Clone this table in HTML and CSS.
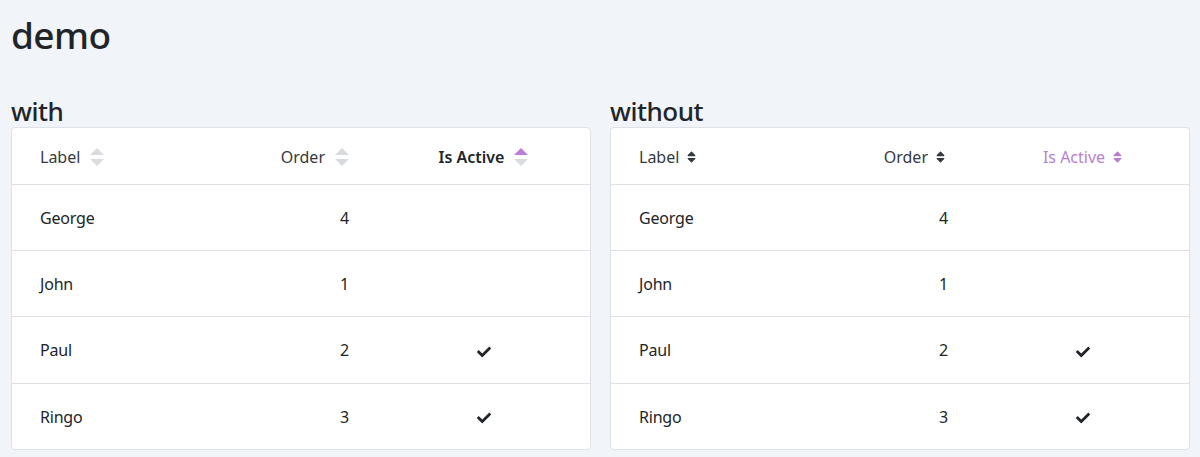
FILE: index.html
```html
<!DOCTYPE html>
<html lang="en">
<head>
<meta charset="utf-8">
<title>demo</title>
<link rel="stylesheet" href="styles.css">
</head>
<body>
<h1 class="title">demo</h1>
<div class="panels">
  <section class="panel">
    <h3 class="panel-title">with</h3>
    <div class="card">
      <table class="grid">
        <colgroup><col class="c1"><col class="c2"><col class="c3"></colgroup>
        <thead>
          <tr>
            <th class="left"><span class="th-in">Label <svg class="tri" viewBox="0 0 14 18"><path class="up" d="M7 0L14 7H0z"/><path class="down" d="M0 11H14L7 18z"/></svg></span></th>
            <th class="right"><span class="th-in">Order <svg class="tri" viewBox="0 0 14 18"><path class="up" d="M7 0L14 7H0z"/><path class="down" d="M0 11H14L7 18z"/></svg></span></th>
            <th class="center active-b"><span class="th-in">Is Active <svg class="tri" viewBox="0 0 14 18"><path class="up on" d="M7 0L14 7H0z"/><path class="down" d="M0 11H14L7 18z"/></svg></span></th>
          </tr>
        </thead>
        <tbody>
          <tr><td class="left">George</td><td class="right">4</td><td class="center"></td></tr>
          <tr><td class="left">John</td><td class="right">1</td><td class="center"></td></tr>
          <tr class="tall"><td class="left">Paul</td><td class="right">2</td><td class="center"><svg class="check" viewBox="0 0 512 512"><path d="M173.898 439.404l-166.4-166.4c-9.997-9.997-9.997-26.206 0-36.204l36.203-36.204c9.997-9.998 26.207-9.998 36.204 0L192 312.69 432.095 72.596c9.997-9.997 26.207-9.997 36.204 0l36.203 36.204c9.997 9.997 9.997 26.206 0 36.204l-294.4 294.401c-9.998 9.997-26.207 9.997-36.204-.001z"/></svg></td></tr>
          <tr><td class="left">Ringo</td><td class="right">3</td><td class="center"><svg class="check" viewBox="0 0 512 512"><path d="M173.898 439.404l-166.4-166.4c-9.997-9.997-9.997-26.206 0-36.204l36.203-36.204c9.997-9.998 26.207-9.998 36.204 0L192 312.69 432.095 72.596c9.997-9.997 26.207-9.997 36.204 0l36.203 36.204c9.997 9.997 9.997 26.206 0 36.204l-294.4 294.401c-9.998 9.997-26.207 9.997-36.204-.001z"/></svg></td></tr>
        </tbody>
      </table>
    </div>
  </section>
  <section class="panel">
    <h3 class="panel-title">without</h3>
    <div class="card">
      <table class="grid">
        <colgroup><col class="c1"><col class="c2"><col class="c3"></colgroup>
        <thead>
          <tr>
            <th class="left"><span class="th-in">Label <svg class="sort" viewBox="0 0 320 512"><path d="M41 288h238c21.4 0 32.1 25.9 17 41L177 448c-9.4 9.4-24.6 9.4-33.9 0L24 329c-15.1-15.1-4.4-41 17-41zm255-105L177 64c-9.4-9.4-24.6-9.4-33.9 0L24 183c-15.1 15.1-4.4 41 17 41h238c21.4 0 32.1-25.9 17-41z"/></svg></span></th>
            <th class="right"><span class="th-in">Order <svg class="sort sort-r" viewBox="0 0 320 512"><path d="M41 288h238c21.4 0 32.1 25.9 17 41L177 448c-9.4 9.4-24.6 9.4-33.9 0L24 329c-15.1-15.1-4.4-41 17-41zm255-105L177 64c-9.4-9.4-24.6-9.4-33.9 0L24 183c-15.1 15.1-4.4 41 17 41h238c21.4 0 32.1-25.9 17-41z"/></svg></span></th>
            <th class="center purple"><span class="th-in">Is Active <svg class="sort" viewBox="0 0 320 512"><path d="M41 288h238c21.4 0 32.1 25.9 17 41L177 448c-9.4 9.4-24.6 9.4-33.9 0L24 329c-15.1-15.1-4.4-41 17-41zm255-105L177 64c-9.4-9.4-24.6-9.4-33.9 0L24 183c-15.1 15.1-4.4 41 17 41h238c21.4 0 32.1-25.9 17-41z"/></svg></span></th>
          </tr>
        </thead>
        <tbody>
          <tr><td class="left">George</td><td class="right">4</td><td class="center"></td></tr>
          <tr><td class="left">John</td><td class="right">1</td><td class="center"></td></tr>
          <tr class="tall"><td class="left">Paul</td><td class="right">2</td><td class="center"><svg class="check" viewBox="0 0 512 512"><path d="M173.898 439.404l-166.4-166.4c-9.997-9.997-9.997-26.206 0-36.204l36.203-36.204c9.997-9.998 26.207-9.998 36.204 0L192 312.69 432.095 72.596c9.997-9.997 26.207-9.997 36.204 0l36.203 36.204c9.997 9.997 9.997 26.206 0 36.204l-294.4 294.401c-9.998 9.997-26.207 9.997-36.204-.001z"/></svg></td></tr>
          <tr><td class="left">Ringo</td><td class="right">3</td><td class="center"><svg class="check" viewBox="0 0 512 512"><path d="M173.898 439.404l-166.4-166.4c-9.997-9.997-9.997-26.206 0-36.204l36.203-36.204c9.997-9.998 26.207-9.998 36.204 0L192 312.69 432.095 72.596c9.997-9.997 26.207-9.997 36.204 0l36.203 36.204c9.997 9.997 9.997 26.206 0 36.204l-294.4 294.401c-9.998 9.997-26.207 9.997-36.204-.001z"/></svg></td></tr>
        </tbody>
      </table>
    </div>
  </section>
</div>
</body>
</html>
```

FILE: styles.css
```css
html, body {
  margin: 0;
  padding: 0;
  background: #f1f4f8;
}
body {
  font-family: "Noto Sans", "Open Sans", sans-serif;
  color: #212529;
  padding: 0 10px 0 11px;
}
.title {
  font-size: 37px;
  font-weight: 500;
  letter-spacing: -0.6px;
  line-height: 48px;
  margin: 11px 0 0 0;
}
.panels {
  display: grid;
  grid-template-columns: 1fr 1fr;
  column-gap: 19px;
  margin-top: 36px;
}
.panel-title {
  font-size: 26px;
  font-weight: 500;
  letter-spacing: -0.5px;
  line-height: 32px;
  margin: 0;
}
.card {
  background: #fff;
  border: 1px solid #dee2e6;
  border-radius: 4px;
  overflow: hidden;
}
.grid {
  width: 100%;
  border-collapse: collapse;
  table-layout: fixed;
  font-size: 16px;
}
.c1 { width: 200px; }
.c2 { width: 163px; }
.c3 { width: auto; }
.grid th {
  font-weight: 400;
  color: #343a40;
  height: 56px;
  padding: 0 26px 0 28px;
  border-bottom: 1px solid #dee2e6;
  white-space: nowrap;
}
.grid td {
  height: 65px;
  padding: 0 26px 0 28px;
  border-top: 1px solid #dee2e6;
  letter-spacing: -0.2px;
}
.grid tr.tall td { height: 66px; }
.left { text-align: left; }
.right { text-align: right; }
.center { text-align: center; }
.th-in {
  display: inline-flex;
  align-items: center;
  gap: 10px;
  vertical-align: middle;
}
.tri {
  width: 14px;
  height: 18px;
}
.tri .up, .tri .down { fill: #d8dce1; }
.tri .up.on { fill: #b97fd3; }
.active-b { font-weight: 600 !important; color: #212529 !important; }
.sort {
  width: 9px;
  height: 14px;
  fill: #343a40;
  margin-left: -2px;
}
.sort-r { margin-right: 3px; }
.purple { color: #b77fd2 !important; }
.purple .sort { fill: #b77fd2; }
.check {
  width: 14px;
  height: 14px;
  fill: #212529;
  vertical-align: middle;
}
```
